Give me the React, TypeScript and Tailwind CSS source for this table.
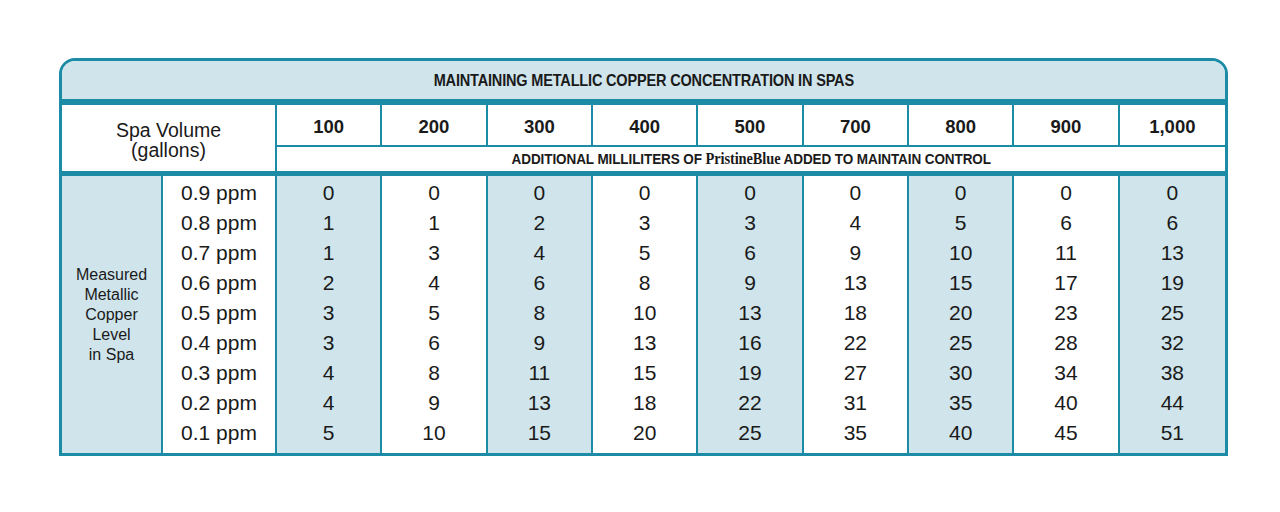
import React from 'react';

const VOLUMES = ['100', '200', '300', '400', '500', '700', '800', '900', '1,000'];
const PPM = ['0.9 ppm', '0.8 ppm', '0.7 ppm', '0.6 ppm', '0.5 ppm', '0.4 ppm', '0.3 ppm', '0.2 ppm', '0.1 ppm'];

// values per volume column, top (0.9 ppm) to bottom (0.1 ppm)
const DOSES: number[][] = [
  [0, 1, 1, 2, 3, 3, 4, 4, 5],
  [0, 1, 3, 4, 5, 6, 8, 9, 10],
  [0, 2, 4, 6, 8, 9, 11, 13, 15],
  [0, 3, 5, 8, 10, 13, 15, 18, 20],
  [0, 3, 6, 9, 13, 16, 19, 22, 25],
  [0, 4, 9, 13, 18, 22, 27, 31, 35],
  [0, 5, 10, 15, 20, 25, 30, 35, 40],
  [0, 6, 11, 17, 23, 28, 34, 40, 45],
  [0, 6, 13, 19, 25, 32, 38, 44, 51],
];

const GRID = 'grid grid-cols-[101px_114px_repeat(9,1fr)]';

const App: React.FC = () => {
  return (
    <div className="w-[1280px] h-[512px] bg-white pt-[58px] pl-[59px] font-['Liberation_Sans',Arial,sans-serif] text-[#1a1a1a]">
      <div className="w-[1169px] border-[3px] border-[#1b8ba6] rounded-t-[16px] overflow-hidden">
        {/* title band */}
        <div className="h-[44px] bg-[#cfe4eb] border-b-[6px] border-[#1b8ba6] flex items-center justify-center">
          <span className="inline-block scale-x-[0.88] font-bold text-[16.5px] tracking-[-0.2px] whitespace-nowrap">
            MAINTAINING METALLIC COPPER CONCENTRATION IN SPAS
          </span>
        </div>

        {/* header rows */}
        <div className={`${GRID} grid-rows-[42px_24px] border-b-[5px] border-[#1b8ba6] bg-white`}>
          <div className="col-span-2 row-span-2 border-r-2 border-[#1b8ba6] flex flex-col items-center justify-center text-[19.5px] leading-[20px] pt-[3px]">
            <span>Spa Volume</span>
            <span>(gallons)</span>
          </div>
          {VOLUMES.map((v, i) => (
            <div
              key={v}
              className={`border-b-2 border-[#1b8ba6] flex items-center justify-center font-bold text-[18.5px] pt-[3px] ${i < VOLUMES.length - 1 ? 'border-r-2' : ''}`}
            >
              {v}
            </div>
          ))}
          <div className="col-span-9 flex items-center justify-center">
            <span className="inline-block scale-x-[0.9] whitespace-nowrap font-bold text-[15px] tracking-[-0.1px]">
              ADDITIONAL MILLILITERS OF{' '}
              <span className="font-['Liberation_Serif',serif] text-[16px]">PristineBlue</span>{' '}
              ADDED TO MAINTAIN CONTROL
            </span>
          </div>
        </div>

        {/* data */}
        <div className={`${GRID} h-[277px]`}>
          <div className="bg-[#cfe4eb] border-r-2 border-[#1b8ba6] flex flex-col items-center justify-center text-[16px] leading-[20px] text-center">
            <span>Measured</span>
            <span>Metallic</span>
            <span>Copper</span>
            <span>Level</span>
            <span>in Spa</span>
          </div>
          <div className="bg-white border-r-2 border-[#1b8ba6] flex flex-col pt-[2px]">
            {PPM.map((p) => (
              <div key={p} className="h-[30px] flex items-center justify-center text-[21px]">
                {p}
              </div>
            ))}
          </div>
          {DOSES.map((col, ci) => (
            <div
              key={ci}
              className={`flex flex-col pt-[2px] ${ci % 2 === 0 ? 'bg-[#cfe4eb]' : 'bg-white'} ${ci < DOSES.length - 1 ? 'border-r-2 border-[#1b8ba6]' : ''}`}
            >
              {col.map((n, ri) => (
                <div key={ri} className="h-[30px] flex items-center justify-center text-[21px]">
                  {n}
                </div>
              ))}
            </div>
          ))}
        </div>
      </div>
    </div>
  );
};

export default App;
